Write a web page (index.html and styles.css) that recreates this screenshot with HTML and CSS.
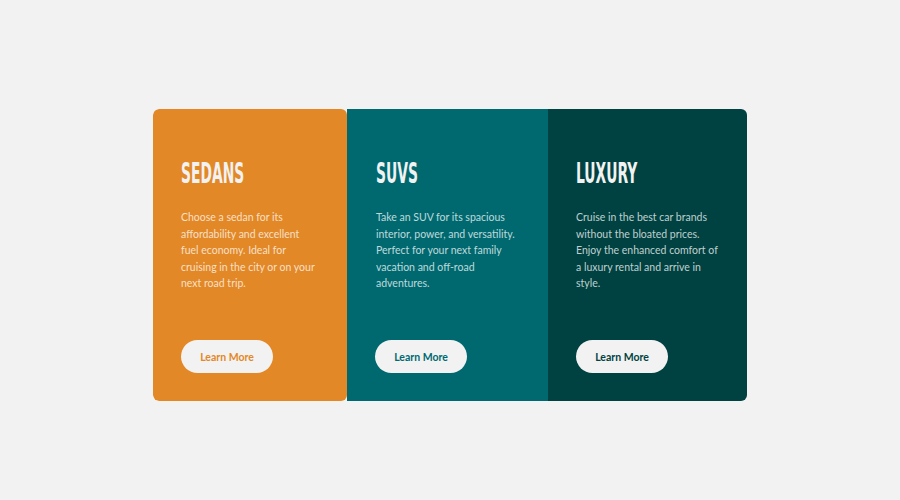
FILE: index.html
```html
<!DOCTYPE html>
<html lang="en">
<head>
<meta charset="utf-8">
<title>3-column preview card</title>
<link rel="stylesheet" href="styles.css">
</head>
<body>
<main class="cards">
  <section class="card card-sedans">
    <h2 class="card-title"><span>SEDANS</span></h2>
    <p class="card-text">Choose a sedan for its affordability and excellent fuel economy. Ideal for cruising in the city or on your next road trip.</p>
    <a class="card-btn" href="#">Learn More</a>
  </section>
  <section class="card card-suvs">
    <h2 class="card-title"><span>SUVS</span></h2>
    <p class="card-text">Take an SUV for its spacious interior, power, and versatility. Perfect for your next family vacation and off-road adventures.</p>
    <a class="card-btn" href="#">Learn More</a>
  </section>
  <section class="card card-luxury">
    <h2 class="card-title"><span>LUXURY</span></h2>
    <p class="card-text">Cruise in the best car brands without the bloated prices. Enjoy the enhanced comfort of a luxury rental and arrive in style.</p>
    <a class="card-btn" href="#">Learn More</a>
  </section>
</main>
</body>
</html>
```
FILE: styles.css
```css
* { box-sizing: border-box; }
html, body { margin: 0; padding: 0; }
body {
  background: #f2f2f2;
  width: 900px;
  height: 500px;
  padding-top: 10px;
  display: flex;
  justify-content: center;
  align-items: center;
  font-family: "Lato", "Liberation Sans", sans-serif;
}
.cards {
  display: grid;
  grid-template-columns: 194px 201px 199px;
  height: 292px;
  border-radius: 6px;
  overflow: hidden;
}
.card {
  display: flex;
  flex-direction: column;
  padding: 52px 28px 28px;
}
.card-suvs .card-title,
.card-suvs .card-text { padding-left: 1px; }
.card-sedans { background: #e38826; color: #e38826; border-radius: 6px; }
.card-suvs { background: #006970; color: #006970; }
.card-luxury { background: #004241; color: #004241; }
.card-title {
  margin: 0;
  height: 26px;
  font-family: "DejaVu Sans Condensed", "Liberation Sans", sans-serif;
  font-weight: 700;
  font-size: 28px;
  line-height: 26px;
  color: #f2f2f2;
  white-space: nowrap;
}
.card-title span {
  display: inline-block;
  transform: scaleX(0.55);
  transform-origin: left center;
}
.card-text {
  margin: 22px 0 0;
  font-size: 10.5px;
  line-height: 16.5px;
  color: rgba(255, 255, 255, 0.75);
}
.card-btn {
  margin-top: auto;
  align-self: flex-start;
  width: 92px;
  height: 33px;
  border-radius: 17px;
  background: #f2f2f2;
  color: inherit;
  text-decoration: none;
  font-size: 10.5px;
  font-weight: 700;
  display: flex;
  align-items: center;
  justify-content: center;
}
```
